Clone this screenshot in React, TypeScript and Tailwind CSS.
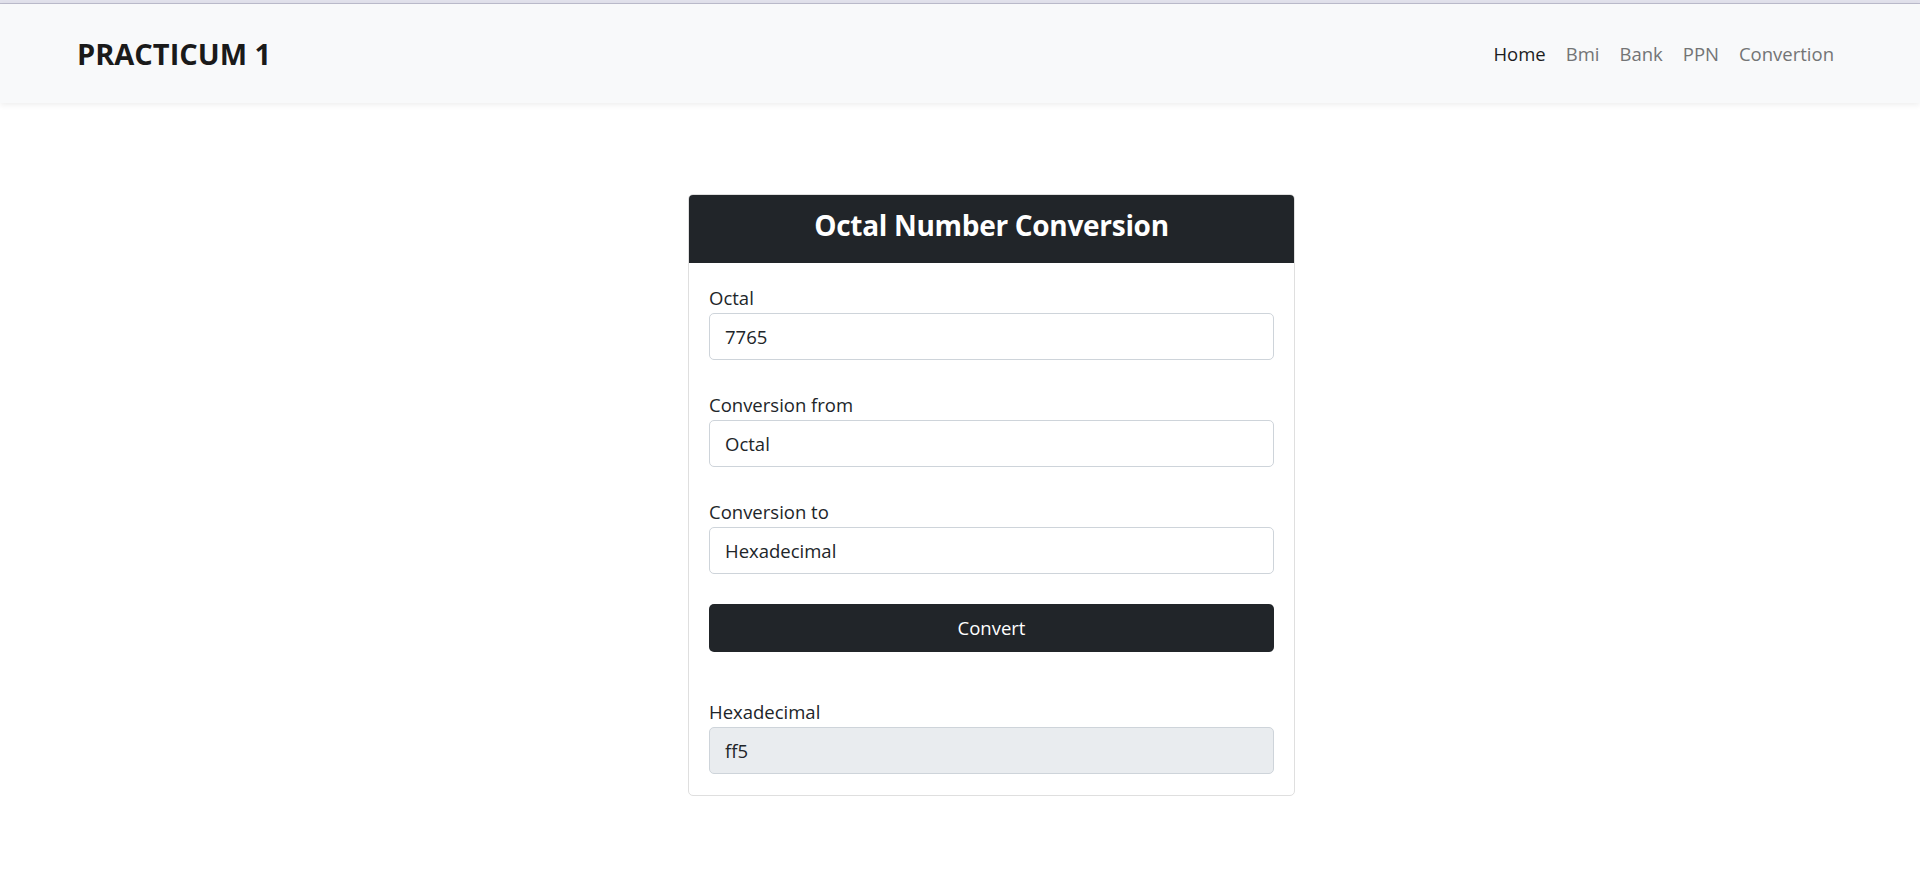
// Practicum 1 — octal conversion page.

const NAV_LINKS = ['Home', 'Bmi', 'Bank', 'PPN', 'Convertion']

const FONT = { fontFamily: '"Open Sans", "Noto Sans", sans-serif' }

function Field({ label, value, readOnly }: { label: string; value: string; readOnly?: boolean }) {
  return (
    <div className="flex flex-col">
      <label className="h-[30px] leading-[30px] text-[18.5px] text-[#212529]">{label}</label>
      <div
        className={`h-[47px] flex items-center px-[15px] rounded-[5px] border border-[#ced4da] text-[18.5px] text-[#212529] ${
          readOnly ? 'bg-[#e9ecef]' : 'bg-white'
        }`}
      >
        {value}
      </div>
    </div>
  )
}

export default function App() {
  return (
    <div className="min-h-screen bg-white" style={FONT}>
      <div className="h-[4px] bg-[#e1e1eb] border-b border-[#bcbccc]" />
      <nav className="h-[99px] bg-[#f8f9fa] shadow-[0_2px_6px_rgba(0,0,0,0.07)] flex items-center justify-between pl-[77px] pr-[76px]">
        <span className="text-[29px] font-bold text-[#1a1a1a]">PRACTICUM 1</span>
        <ul className="flex items-center">
          {NAV_LINKS.map((l, i) => (
            <li key={l}>
              <a
                className={`block px-[10px] text-[18.5px] ${i === 0 ? 'text-[#1c1d1e]' : 'text-[#737475]'}`}
              >
                {l}
              </a>
            </li>
          ))}
        </ul>
      </nav>

      <div className="flex pt-[91px] pl-[688px]">
        <div className="w-[607px] border border-[#dfdfdf] rounded-[5px] overflow-hidden">
          <div className="h-[68px] bg-[#212529] flex items-center justify-center pb-[8px]">
            <h3 className="text-[28px] font-bold tracking-[-0.3px] text-white">Octal Number Conversion</h3>
          </div>
          <div className="px-[20px] pt-[20px] pb-[21px] flex flex-col">
            <Field label="Octal" value="7765" />
            <div className="h-[30px]" />
            <Field label="Conversion from" value="Octal" />
            <div className="h-[30px]" />
            <Field label="Conversion to" value="Hexadecimal" />
            <button className="mt-[30px] h-[48px] rounded-[5px] bg-[#212529] text-white text-[18.5px]">
              Convert
            </button>
            <div className="h-[45px]" />
            <Field label="Hexadecimal" value="ff5" readOnly />
          </div>
        </div>
      </div>
    </div>
  )
}
